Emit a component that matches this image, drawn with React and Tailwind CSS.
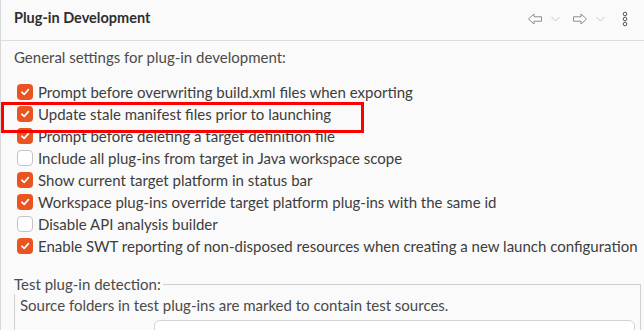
import React from "react";

const Check = ({ on }) =>
  on ? (
    <span className="w-[16px] h-[16px] rounded-[4px] bg-[#e95420] flex items-center justify-center shrink-0">
      <svg width="10" height="10" viewBox="0 0 10 10">
        <path d="M1.8 5.2 L4.2 7.4 L8.4 2.6" fill="none" stroke="#fff" strokeWidth="1.6" strokeLinecap="round" strokeLinejoin="round" />
      </svg>
    </span>
  ) : (
    <span className="w-[16px] h-[16px] rounded-[4px] bg-white border border-[#c4c4c4] shrink-0" />
  );

const rows = [
  [true, "Prompt before overwriting build.xml files when exporting"],
  [true, "Update stale manifest files prior to launching"],
  [true, "Prompt before deleting a target definition file"],
  [false, "Include all plug-ins from target in Java workspace scope"],
  [true, "Show current target platform in status bar"],
  [true, "Workspace plug-ins override target platform plug-ins with the same id"],
  [false, "Disable API analysis builder"],
  [true, "Enable SWT reporting of non-disposed resources when creating a new launch configuration"],
];

const Arrow = ({ flip }) => (
  <svg width="16" height="16" viewBox="0 0 16 16" className={flip ? "-scale-x-100" : ""}>
    <path d="M1.5 8 L7 3 V5.8 H14.5 V10.2 H7 V13 Z" fill="#fff" stroke="#8a8a8a" strokeWidth="1" strokeLinejoin="round" />
  </svg>
);

const Chevron = () => (
  <svg width="9" height="6" viewBox="0 0 9 6">
    <path d="M0.5 1 L4.5 5 L8.5 1" fill="none" stroke="#c8c8c8" strokeWidth="1" />
  </svg>
);

export default function App() {
  return (
    <div className="relative w-[644px] h-[330px] overflow-hidden bg-[#fafafa] border-l border-[#d8d8d8] text-[#3d3d3d] font-['Lato',sans-serif] text-[15px]">
      <div className="h-[41px] border-b border-[#dedede] flex items-center pl-[13px] pr-[15px]">
        <div className="font-bold text-[14.5px] text-[#2e2e2e] flex-1 -mt-[4px]">Plug-in Development</div>
        <div className="flex items-center -mt-[2px]">
          <Arrow />
          <span className="ml-[8px]"><Chevron /></span>
          <span className="ml-[12px]"><Arrow flip /></span>
          <span className="ml-[8px]"><Chevron /></span>
          <svg width="8" height="16" viewBox="0 0 8 16" className="ml-[16px]">
            <circle cx="4" cy="3" r="1.8" fill="none" stroke="#555" strokeWidth="1" />
            <circle cx="4" cy="8" r="1.8" fill="none" stroke="#555" strokeWidth="1" />
            <circle cx="4" cy="13" r="1.8" fill="none" stroke="#555" strokeWidth="1" />
          </svg>
        </div>
      </div>
      <div className="pl-[13px] pt-[5px]">
        <div className="h-[22px] leading-[22px] text-[#4a4a4a]">General settings for plug-in development:</div>
        <div className="mt-[13px] flex flex-col">
          {rows.map(([on, t], i) => (
            <div key={i} className="h-[22px] flex items-center pl-[3px] gap-[5px] whitespace-nowrap">
              <Check on={on} />
              <span className="leading-[22px]">{t}</span>
            </div>
          ))}
        </div>
        <div className="mt-[16px] mr-[3px]">
          <div className="flex items-center h-[22px]">
            <span className="leading-[22px] text-[#4a4a4a] pr-[2px]">Test plug-in detection:</span>
            <div className="flex-1 h-[11px] border-t border-r border-[#d0d0d0] self-end" />
          </div>
          <div className="border-l border-r border-[#d0d0d0] h-[60px] pl-[5px]">
            <div className="h-[22px] leading-[22px] -mt-[1px] text-[#4a4a4a]">Source folders in test plug-ins are marked to contain test sources.</div>
            <div className="flex items-start mt-[4px]">
              <span className="w-[134px] pl-[16px] pt-[9px] leading-[22px]">Test pattern:</span>
              <div className="flex-1 mr-[5px] h-[34px] bg-white border border-[#d4d4d4] rounded-[6px] pl-[10px] pt-[6px] font-['DejaVu_Sans_Mono',monospace] text-[13px]">[\/]test[^\/]*[\/]</div>
            </div>
          </div>
        </div>
      </div>
      <div className="absolute left-0 top-[102px] w-[363px] h-[31px] border-[3px] border-[#ff0000]" />
    </div>
  );
}
